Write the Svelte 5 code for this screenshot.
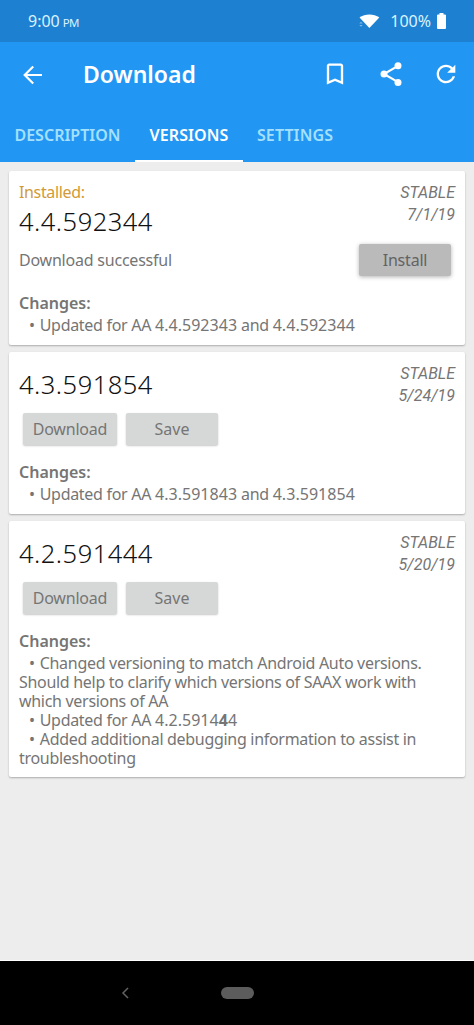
<script lang="ts">
  type Release = {
    version: string
    date: string
    installed?: boolean
    changes: string[]
  }

  const tabs = ['DESCRIPTION', 'VERSIONS', 'SETTINGS']
  let active = $state('VERSIONS')

  const releases: Release[] = [
    {
      version: '4.4.592344',
      date: '7/1/19',
      installed: true,
      changes: ['Updated for AA 4.4.592343 and 4.4.592344']
    },
    {
      version: '4.3.591854',
      date: '5/24/19',
      changes: ['Updated for AA 4.3.591843 and 4.3.591854']
    },
    {
      version: '4.2.591444',
      date: '5/20/19',
      changes: [
        'Changed versioning to match Android Auto versions. Should help to clarify which versions of SAAX work with which versions of AA',
        'Updated for AA 4.2.5914*4*4',
        'Added additional debugging information to assist in troubleshooting'
      ]
    }
  ]

  // Version numbers are set wider than prose, *x* marks bold
  function parts(text: string): string[] {
    return text.split(/(\*\d\*|[\d.]*\d[\d.]*)/).filter(Boolean)
  }
</script>

<div class="screen">
  <header>
    <div class="status">
      <span class="time">9:00<small>PM</small></span>
      <svg class="wifi" width="21" height="16" viewBox="0 0 21 16">
        <path d="M.5 4.600C6 .3 14.800 .3 20.300 4.600L10.400 15z" fill="#fff" />
        <path d="M.3 10.500L2 8.800l1.700 1.700zM.3 12L2 13.700l1.700-1.700z" fill="#7fb8e8" />
      </svg>
      <span class="percent">100%</span>
      <svg class="battery" width="9" height="16" viewBox="0 0 9 16">
        <path d="M2.500 0h4v1.500H8q1 0 1 1V15q0 1-1 1H1q-1 0-1-1V2.500q0-1 1-1h1.500z" fill="#fff" />
      </svg>
    </div>

    <div class="toolbar">
      <button class="icon" aria-label="Back">
        <svg width="20" height="20" viewBox="0 0 20 20">
          <path d="M19 10H2M10.200 1.500L1.700 10l8.500 8.500" fill="none" stroke="#fff" stroke-width="2.200" />
        </svg>
      </button>
      <h1>Download</h1>
      <div class="tools">
        <button class="icon" aria-label="Bookmark">
          <svg width="28" height="28" viewBox="0 0 24 24">
            <path d="M17 3H7c-1.100 0-1.990.9-1.990 2L5 21l7-3 7 3V5c0-1.100-.9-2-2-2zm0 15l-5-2.180L7 18V5h10v13z" fill="#fff" />
          </svg>
        </button>
        <button class="icon" aria-label="Share">
          <svg width="28" height="28" viewBox="0 0 24 24">
            <path d="M18 5L6 12l12 7" fill="none" stroke="#fff" stroke-width="1.900" />
            <circle cx="18" cy="5" r="3" fill="#fff" />
            <circle cx="6" cy="12" r="3" fill="#fff" />
            <circle cx="18" cy="19.200" r="3" fill="#fff" />
          </svg>
        </button>
        <button class="icon" aria-label="Refresh">
          <svg width="28" height="28" viewBox="0 0 24 24">
            <path d="M17.650 6.350C16.200 4.900 14.210 4 12 4c-4.420 0-7.990 3.580-7.990 8s3.570 8 7.990 8c3.730 0 6.840-2.550 7.730-6h-2.080c-.82 2.330-3.040 4-5.650 4-3.310 0-6-2.690-6-6s2.690-6 6-6c1.660 0 3.140.69 4.220 1.780L13 11h7V4l-2.350 2.350z" fill="#fff" />
          </svg>
        </button>
      </div>
    </div>

    <nav>
      {#each tabs as tab}
        <button class="tab {tab.toLowerCase()}" class:active={tab === active} onclick={() => (active = tab)}>
          {tab}
        </button>
      {/each}
    </nav>
  </header>

  <main>
    {#each releases as release}
      <article>
        <div class="head" class:tall={release.installed}>
          <div>
            {#if release.installed}
              <p class="installed">Installed:</p>
            {/if}
            <h2>{release.version}</h2>
          </div>
          <div class="meta">STABLE<br />{release.date}</div>
        </div>

        <div class="actions">
          {#if release.installed}
            <span class="state">Download successful</span>
            <button class="btn install">Install</button>
          {:else}
            <button class="btn download">Download</button>
            <button class="btn save">Save</button>
          {/if}
        </div>

        <h3>Changes:</h3>
        <ul>
          {#each release.changes as change}
            <li>
              {#each parts(change) as part}{#if part.startsWith('*')}<b>{part[1]}</b>{:else if /\d/.test(part)}<span class="num">{part}</span>{:else}{part}{/if}{/each}
            </li>
          {/each}
        </ul>
      </article>
    {/each}
  </main>

  <footer>
    <svg class="back" width="8" height="12" viewBox="0 0 8 12">
      <path d="M7 1L2 6l5 5" fill="none" stroke="#626262" stroke-width="1.500" />
    </svg>
    <div class="pill"></div>
  </footer>
</div>

<style>
  :global(body) {
    background: #ededed;
  }

  .screen {
    display: flex;
    flex-direction: column;
    height: 1025px;
    overflow: hidden;
    background: #ededed;
    font-family: 'Noto Sans', 'Open Sans', sans-serif;
    font-size: 16px;
    color: #757575;
  }

  button {
    border: none;
    padding: 0;
    background: none;
    font: inherit;
    color: inherit;
  }

  h1,
  h2,
  h3,
  p,
  ul {
    margin: 0;
    padding: 0;
  }

  header {
    height: 162px;
    background: #2296f3;
    color: #fff;
  }

  .status {
    display: flex;
    align-items: center;
    height: 42px;
    box-sizing: border-box;
    padding: 0 28px;
    background: #1e80d0;
  }

  .time {
    margin-right: auto;
    color: #d9f3ff;
  }

  .time small {
    margin-left: 3px;
    font-size: 11.5px;
    letter-spacing: -0.8px;
  }

  .wifi {
    margin-right: 10px;
  }

  .percent {
    margin-right: 6px;
    color: #d9f3ff;
  }

  .toolbar {
    display: flex;
    align-items: center;
    height: 65px;
    padding: 0 14px 0 23px;
  }

  .icon {
    display: flex;
  }

  h1 {
    margin: -1px 0 0 40px;
    font-size: 23px;
    font-weight: 600;
    line-height: 30px;
  }

  .tools {
    display: flex;
    align-items: center;
    gap: 27.5px;
    margin: -1px 0 0 auto;
  }

  nav {
    display: flex;
    height: 55px;
  }

  .tab {
    height: 55px;
    box-sizing: border-box;
    padding-top: 2px;
    font-weight: 600;
    color: #a5e1ff;
    border-bottom: 2px solid transparent;
    white-space: nowrap;
  }

  .description {
    width: 135px;
  }

  .versions {
    width: 108px;
    letter-spacing: 0.1px;
  }

  .settings {
    width: 104px;
    letter-spacing: 0.1px;
  }

  .tab.active {
    color: #fff;
    border-color: #fff;
  }

  main {
    flex: 1;
    display: flex;
    flex-direction: column;
    gap: 7px;
    padding: 9px 9px 0;
  }

  article {
    padding: 0 10px 10px;
    border-radius: 2px;
    background: #fff;
    box-shadow: 0 1px 2px rgba(0, 0, 0, 0.28);
  }

  article:last-child {
    padding-bottom: 9px;
  }

  .head {
    display: flex;
    justify-content: space-between;
    height: 61px;
  }

  .head.tall {
    height: 73px;
  }

  .installed {
    height: 22px;
    padding-top: 10px;
    margin-bottom: -14px;
    line-height: 22px;
    letter-spacing: -0.35px;
    color: #d29a36;
  }

  h2 {
    padding-top: 15px;
    font-size: 25.5px;
    font-weight: 300;
    line-height: 34px;
    letter-spacing: 0.5px;
    color: #111;
  }

  .meta {
    padding-top: 11px;
    font-family: Roboto, sans-serif;
    font-style: italic;
    line-height: 22.3px;
    text-align: right;
  }

  .actions {
    display: flex;
    align-items: center;
    height: 31.5px;
    padding: 0 4px;
    gap: 9px;
  }

  .state {
    margin: 0 auto 0 -4px;
    letter-spacing: -0.22px;
  }

  .btn {
    width: 92px;
    height: 31.5px;
    border-radius: 2px;
    background: #d6d8d7;
    box-shadow: 0 1px 2px rgba(0, 0, 0, 0.22);
  }

  .download {
    width: 94px;
    letter-spacing: -0.2px;
  }

  .install {
    background: #bababa;
    color: #636363;
    letter-spacing: -0.2px;
    box-shadow: 0 1px 4px rgba(0, 0, 0, 0.3);
  }

  h3 {
    margin-top: 16.5px;
    font-size: 16px;
    font-weight: 600;
    line-height: 22px;
  }

  ul {
    margin-top: 2px;
    list-style: none;
    line-height: 19px;
    letter-spacing: -0.3px;
  }

  li::before {
    content: '•';
    margin: 0 5px 0 10px;
  }

  .num {
    letter-spacing: 0.04px;
  }

  b {
    letter-spacing: 0.2px;
  }

  footer {
    position: relative;
    display: flex;
    align-items: center;
    justify-content: center;
    height: 64px;
    border-top: 1px solid #fff;
    background: #000;
  }

  .back {
    position: absolute;
    left: 121px;
  }

  .pill {
    width: 33px;
    height: 12px;
    border-radius: 6px;
    background: #5c5c5c;
  }
</style>
